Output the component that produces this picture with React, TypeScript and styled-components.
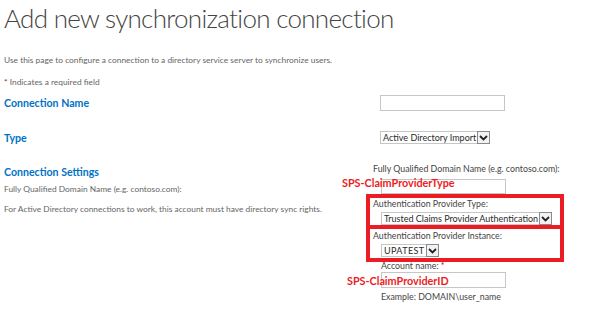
import React from "react";
import styled, { createGlobalStyle } from "styled-components";

const GlobalStyle = createGlobalStyle`
  html, body {
    margin: 0;
    padding: 0;
    background: #ffffff;
  }
  body {
    font-family: Lato, "Open Sans", "Liberation Sans", sans-serif;
    color: #444444;
  }
`;

const Chevron: React.FC = () => (
  <svg width="9" height="6" viewBox="0 0 9 6" aria-hidden="true">
    <path d="M1 1 L4.5 4.5 L8 1" fill="none" stroke="#222" strokeWidth="1.8" />
  </svg>
);

const App: React.FC = () => {
  return (
    <Page>
      <GlobalStyle />
      <Title>Add new synchronization connection</Title>
      <Intro>
        Use this page to configure a connection to a directory service server to
        synchronize users.
      </Intro>
      <Required>
        <Star>*</Star> Indicates a required field
      </Required>

      <Row $top={7}>
        <Heading>Connection Name</Heading>
        <Field>
          <TextBox $height={16} />
        </Field>
      </Row>

      <Row $top={19}>
        <Heading>Type</Heading>
        <Field>
          <FakeSelect $top={1}>
            <SelectText>Active Directory Import</SelectText>
            <ArrowBox>
              <Chevron />
            </ArrowBox>
          </FakeSelect>
        </Field>
      </Row>

      <Row $top={17}>
        <div>
          <Heading $top={1}>Connection Settings</Heading>
          <Note $top={3}>Fully Qualified Domain Name (e.g. contoso.com):</Note>
          <Note $top={8}>
            For Active Directory connections to work, this account must have
            directory sync rights.
          </Note>
        </div>
        <Settings>
          <FieldLabel>Fully Qualified Domain Name (e.g. contoso.com):</FieldLabel>
          <TextBox $height={15} $top={4} />
          <FieldLabel $top={4}>Authentication Provider Type:</FieldLabel>
          <FakeSelect $top={2}>
            <SelectText>Trusted Claims Provider Authentication</SelectText>
            <ArrowBox>
              <Chevron />
            </ArrowBox>
          </FakeSelect>
          <FieldLabel $top={5}>Authentication Provider Instance:</FieldLabel>
          <FakeSelect $top={2}>
            <SelectText $minWidth={39} $wide>
              UPATEST
            </SelectText>
            <ArrowBox>
              <Chevron />
            </ArrowBox>
          </FakeSelect>
          <FieldLabel $top={3} $indent>
            Account name: <Star>*</Star>
          </FieldLabel>
          <TextBox $height={16} $top={0} />
          <FieldLabel $top={3} $indent>
            Example: DOMAIN\user_name
          </FieldLabel>
        </Settings>
      </Row>

      {/* annotations drawn over the screenshot */}
      <Callout style={{ left: 342, top: 176 }}>SPS-ClaimProviderType</Callout>
      <Callout style={{ left: 347, top: 274 }}>SPS-ClaimProviderID</Callout>
      <Highlight>
        <Divider />
      </Highlight>
    </Page>
  );
};

export default App;

const Page = styled.div`
  position: relative;
  width: 602px;
  height: 309px;
  overflow: hidden;
  padding-left: 4px;
  box-sizing: border-box;
`;

const Title = styled.h1`
  margin: 0;
  height: 36px;
  line-height: 36px;
  font-family: Lato, "Open Sans", sans-serif;
  font-weight: 300;
  font-size: 26px;
  letter-spacing: -0.7px;
  color: #444444;
  white-space: nowrap;
`;

const Intro = styled.div`
  margin-top: 18px;
  line-height: 12px;
  font-size: 8.4px;
  color: #666666;
  white-space: nowrap;
`;

const Required = styled.div`
  margin-top: 10px;
  line-height: 12px;
  font-size: 8.4px;
  color: #666666;
`;

const Star = styled.span`
  color: #bf0000;
`;

const Row = styled.div<{ $top: number }>`
  display: grid;
  grid-template-columns: 368px 1fr;
  align-items: start;
  margin-top: ${(p) => p.$top}px;
`;

const Heading = styled.div<{ $top?: number }>`
  margin-top: ${(p) => p.$top ?? 0}px;
  line-height: 16px;
  font-size: 10.6px;
  font-weight: 700;
  color: #0072c6;
`;

const Note = styled.div<{ $top?: number }>`
  margin-top: ${(p) => p.$top ?? 0}px;
  line-height: 12px;
  font-size: 8.4px;
  color: #666666;
  white-space: nowrap;
`;

const Field = styled.div`
  display: flex;
  align-items: flex-start;
  padding-left: 8px;
`;

const Settings = styled.div`
  display: flex;
  flex-direction: column;
  align-items: flex-start;
  padding-left: 1px;
  & > input,
  & > span {
    margin-left: 8px;
  }
`;

const FieldLabel = styled.div<{ $top?: number; $indent?: boolean }>`
  margin-top: ${(p) => p.$top ?? 0}px;
  margin-left: ${(p) => (p.$indent ? 8 : 0)}px;
  line-height: 12px;
  font-size: 8.8px;
  color: #444444;
  white-space: nowrap;
`;

const TextBox = styled.input<{ $height: number; $top?: number }>`
  display: block;
  margin: ${(p) => p.$top ?? 0}px 0 0 0;
  padding: 0;
  width: 125px;
  height: ${(p) => p.$height}px;
  box-sizing: border-box;
  border: 1px solid #c6c6c6;
  background: #ffffff;
`;

const FakeSelect = styled.span<{ $top?: number }>`
  display: flex;
  align-items: stretch;
  flex: none;
  margin-top: ${(p) => p.$top ?? 0}px;
  height: 13px;
  box-sizing: border-box;
  border: 1px solid #c6c6c6;
  background: #ffffff;
`;

const SelectText = styled.span<{ $wide?: boolean; $minWidth?: number }>`
  display: block;
  min-width: ${(p) => p.$minWidth ?? 0}px;
  padding: 0 1px 0 2px;
  line-height: 11px;
  font-size: 9px;
  letter-spacing: ${(p) => (p.$wide ? "0.4px" : "0")};
  color: #2a2a2a;
  white-space: nowrap;
`;

const ArrowBox = styled.span`
  display: flex;
  align-items: center;
  justify-content: center;
  width: 13px;
  height: 13px;
  box-sizing: border-box;
  margin: -1px -1px -1px 0;
  border: 1px solid #8a8a8a;
  background: #f2f2f2;
`;

const Callout = styled.div`
  position: absolute;
  font-size: 10.8px;
  line-height: 14px;
  font-weight: 700;
  color: #ec1c24;
  white-space: nowrap;
`;

const Highlight = styled.div`
  position: absolute;
  left: 366px;
  top: 194px;
  width: 198px;
  height: 68px;
  box-sizing: border-box;
  border: 4px solid #ec1c24;
`;

const Divider = styled.div`
  position: absolute;
  left: 0;
  right: 0;
  top: 27px;
  height: 4px;
  background: #ec1c24;
`;
